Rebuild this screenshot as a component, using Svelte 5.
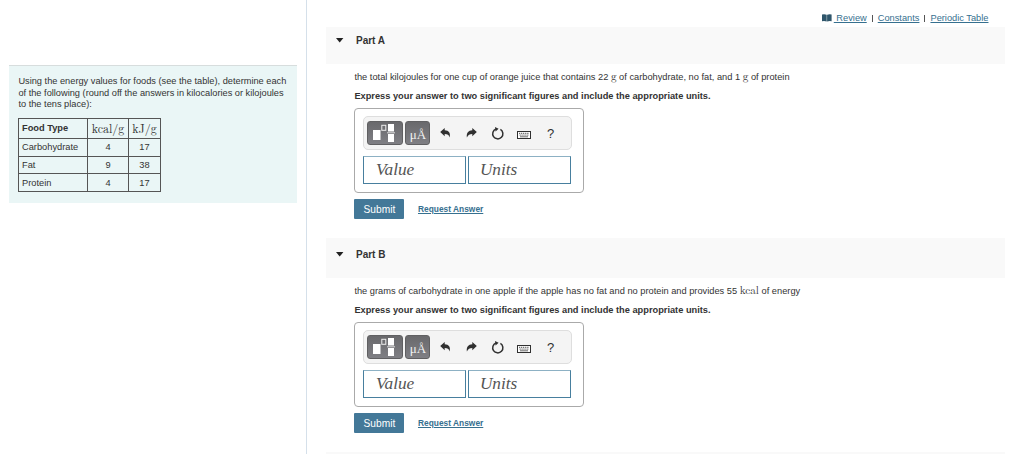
<script lang="ts">
  type Part = {
    id: string;
    label: string;
    before: string;
    unit: string;
    middle: string;
    unit2?: string;
    after?: string;
  };

  const foods = [
    { name: 'Carbohydrate', kcal: 4, kj: 17 },
    { name: 'Fat', kcal: 9, kj: 38 },
    { name: 'Protein', kcal: 4, kj: 17 }
  ];

  const parts: Part[] = [
    {
      id: 'a',
      label: 'Part A',
      before: 'the total kilojoules for one cup of orange juice that contains 22 ',
      unit: 'g',
      middle: ' of carbohydrate, no fat, and 1 ',
      unit2: 'g',
      after: ' of protein'
    },
    {
      id: 'b',
      label: 'Part B',
      before: 'the grams of carbohydrate in one apple if the apple has no fat and no protein and provides 55 ',
      unit: 'kcal',
      middle: ' of energy'
    }
  ];
</script>

<div class="page">
  <aside class="sidebar">
    <div class="intro">
      <p>
        Using the energy values for foods (see the table), determine each<br />
        of the following (round off the answers in kilocalories or kilojoules<br />
        to the tens place):
      </p>
      <table>
        <thead>
          <tr>
            <th class="name">Food Type</th>
            <th class="math kcal">kcal/g</th>
            <th class="math kj">kJ/g</th>
          </tr>
        </thead>
        <tbody>
          {#each foods as food}
            <tr>
              <td class="name">{food.name}</td>
              <td>{food.kcal}</td>
              <td>{food.kj}</td>
            </tr>
          {/each}
        </tbody>
      </table>
    </div>
  </aside>

  <main class="content">
    <nav class="links">
      <svg class="book" width="10" height="8" viewBox="0 0 10 8">
        <path d="M0 .5Q2.5-.1 4.7.7V7.4Q2.4 6.6 0 7.2ZM9.6 .5Q7.3-.1 5.1.7V7.4Q7.4 6.6 9.6 7.2Z" fill="#2f566b" />
      </svg>
      <a href="#review" class="review">&nbsp;Review</a>
      <i></i>
      <a href="#constants" class="constants">Constants</a>
      <i></i>
      <a href="#periodic" class="periodic">Periodic Table</a>
    </nav>

    {#each parts as part}
      <section class="part part-{part.id}">
        <header>
          <svg width="8" height="5" viewBox="0 0 8 5"><path d="M0 0H7.4L3.7 4.6Z" fill="#222" /></svg>
          <h2>{part.label}</h2>
        </header>
        <div class="body">
          <p class="question"><span>{part.before}</span><span class="math">{part.unit}</span><span>{part.middle}</span>{#if part.unit2}<span class="math">{part.unit2}</span><span>{part.after}</span>{/if}</p>
          <p class="instruction">Express your answer to two significant figures and include the appropriate units.</p>

          <div class="answer">
            <div class="toolbar">
              <button class="dark template" aria-label="Templates">
                <svg width="24" height="20" viewBox="0 0 24 20">
                  <rect x="0" y="7" width="7.5" height="10" fill="#fff" />
                  <rect x="8.8" y="2.3" width="4" height="5" fill="none" stroke="#eee" stroke-width="1" />
                  <rect x="15" y="1" width="6" height="7.5" fill="#fff" />
                  <rect x="14" y="9.3" width="8" height="1" fill="#ddd" />
                  <rect x="15" y="11" width="6" height="8" fill="#fff" />
                </svg>
              </button>
              <button class="dark symbols">μÅ</button>
              <button class="plain undo" aria-label="Undo">
                <svg width="11" height="10" viewBox="0 0 11 10">
                  <path d="M4.7 0V2.2C8.9 2.4 10.8 5 9.6 9.6C8.9 6.8 7.6 6 4.7 6V8.2L.2 4Z" fill="#303030" />
                </svg>
              </button>
              <button class="plain redo" aria-label="Redo">
                <svg width="11" height="10" viewBox="0 0 11 10">
                  <path d="M6.3 0V2.2C2.4 2.4.2 5 .9 9.6C2 6.9 3.7 6 6.3 6V8.2L10.8 4Z" fill="#303030" />
                </svg>
              </button>
              <button class="plain reset" aria-label="Reset">
                <svg width="13" height="13" viewBox="0 0 13 13">
                  <path d="M9.4 2.4A5.1 5.1 0 1 1 5 2" fill="none" stroke="#303030" stroke-width="1.5" />
                  <path d="M4 0L7.6 1.7L4.6 4.4Z" fill="#303030" />
                </svg>
              </button>
              <button class="plain keyboard" aria-label="Keyboard">
                <svg width="14" height="8" viewBox="0 0 14 8">
                  <rect x=".5" y=".5" width="13" height="7" fill="#fff" stroke="#303030" />
                  <path d="M2 2.3H12M2.6 4.1H11.7" stroke="#505050" stroke-width="1" stroke-dasharray="1.2 .7" />
                  <path d="M3 5.8H11" stroke="#444" stroke-width=".8" />
                </svg>
              </button>
              <button class="plain help">?</button>
            </div>
            <div class="fields">
              <input class="value" type="text" placeholder="Value" />
              <input class="units" type="text" placeholder="Units" />
            </div>
          </div>

          <div class="actions">
            <button class="submit">Submit</button>
            <a href="#answer">Request Answer</a>
          </div>
        </div>
      </section>
    {/each}
    <div class="next-part"></div>
  </main>
</div>

<style>
  :global(body) {
    margin: 0;
    background: #fff;
  }

  .page {
    display: flex;
    width: 1024px;
    height: 454px;
    overflow: hidden;
    color: #333;
    font-family: "Liberation Sans", Arial, sans-serif;
    font-size: 9.27px;
  }

  .page * {
    box-sizing: border-box;
  }

  p,
  h2 {
    margin: 0;
  }

  a {
    color: #36708f;
    text-decoration: underline;
  }

  .math {
    font-family: "Latin Modern Roman", "Liberation Serif", serif;
  }

  .sidebar {
    width: 307px;
    padding: 65px 9px 0;
    border-right: 1px solid #d5e0ea;
  }

  .intro {
    height: 138px;
    padding: 10px 0 0 9px;
    background: #eaf6f6;
    border-top: 1px solid #d7dddd;
    white-space: nowrap;
  }

  .intro p {
    padding-left: 0.4px;
    font-size: 9.24px;
    line-height: 11.6px;
  }

  table {
    width: 143px;
    margin-top: 7px;
    table-layout: fixed;
    border-collapse: collapse;
  }

  th,
  td {
    height: 17.8px;
    padding: 0;
    border: 1px solid #555;
    text-align: center;
    line-height: 12px;
  }

  th {
    height: 20px;
  }

  th.math {
    font-size: 12px;
    font-weight: normal;
  }

  th.kcal {
    width: 41px;
  }

  th.kj {
    width: 32px;
  }

  .name {
    padding-left: 3px;
    text-align: left;
  }

  .content {
    flex: 1;
    padding-left: 19px;
  }

  .links {
    display: flex;
    align-items: center;
    justify-content: flex-end;
    height: 27px;
    margin-right: 19px;
    padding: 9px 16.5px 0 0;
    white-space: nowrap;
  }

  .links i {
    width: 1px;
    height: 7px;
    margin: 0 5px;
    background: #555;
  }

  .links .book {
    margin-right: 2px;
  }

  .part {
    height: 214px;
  }

  .part-a {
    height: 211px;
  }

  header {
    display: flex;
    align-items: center;
    width: 679px;
    height: 40px;
    padding: 0 0 7px 10px;
    background: #f9f9f9;
  }

  .part-a header {
    height: 37px;
    padding-bottom: 10px;
  }

  h2 {
    margin-left: 12px;
    font-size: 10px;
    line-height: 12px;
  }

  .body {
    padding: 7px 0 0 28.4px;
  }

  .question,
  .instruction {
    height: 12px;
    line-height: 12px;
    white-space: nowrap;
  }

  .question .math {
    font-size: 11.2px;
    line-height: 8px;
  }

  .instruction {
    margin-top: 7px;
    font-size: 9.25px;
    font-weight: bold;
  }

  .answer {
    width: 230px;
    height: 85px;
    margin-top: 6px;
    padding: 7px 0 0 8px;
    border: 1px solid #aaa;
    border-radius: 4px;
  }

  button {
    padding: 0;
    border: 0;
    background: none;
    font-family: inherit;
  }

  .toolbar {
    display: flex;
    align-items: center;
    width: 209px;
    height: 34px;
    padding-left: 3px;
    background: #f4f4f4;
    border: 1px solid #dedede;
    border-radius: 5px;
  }

  .dark {
    display: flex;
    align-items: center;
    justify-content: center;
    height: 24px;
    border: 1px solid #606062;
    border-radius: 3px;
    background: linear-gradient(#69696c, #7f7f84);
    color: #f2f2f2;
  }

  .template {
    width: 36px;
  }

  .symbols {
    width: 25px;
    margin-left: 2px;
    padding-top: 3px;
    font-family: "Liberation Serif", serif;
    font-size: 13px;
  }

  .plain {
    display: flex;
    align-items: center;
    justify-content: center;
    width: 26.4px;
    color: #303030;
  }

  .undo {
    margin-left: 1.5px;
  }

  .help {
    font-size: 13px;
  }

  .keyboard svg {
    margin-top: 3px;
  }

  .fields {
    display: flex;
    gap: 2px;
    margin-top: 6px;
  }

  input {
    width: 103px;
    height: 28px;
    padding: 0 0 0 11.5px;
    border: 1px solid #477f9e;
    border-top-color: #8db1c4;
    background: #fff;
    font-family: "Liberation Serif", serif;
    font-size: 17.3px;
    font-style: italic;
  }

  input.units {
    padding-left: 10.5px;
  }

  input::placeholder {
    color: #555;
    opacity: 1;
  }

  .actions {
    display: flex;
    align-items: center;
    gap: 13.6px;
    margin-top: 6px;
    white-space: nowrap;
  }

  .actions a {
    font-size: 8.4px;
    font-weight: bold;
  }

  .submit {
    width: 50px;
    height: 20px;
    border-radius: 1px;
    background: #437898;
    color: #fff;
    font-size: 10.2px;
  }

  .next-part {
    width: 679px;
    height: 10px;
    background: #f9f9f9;
  }
</style>
